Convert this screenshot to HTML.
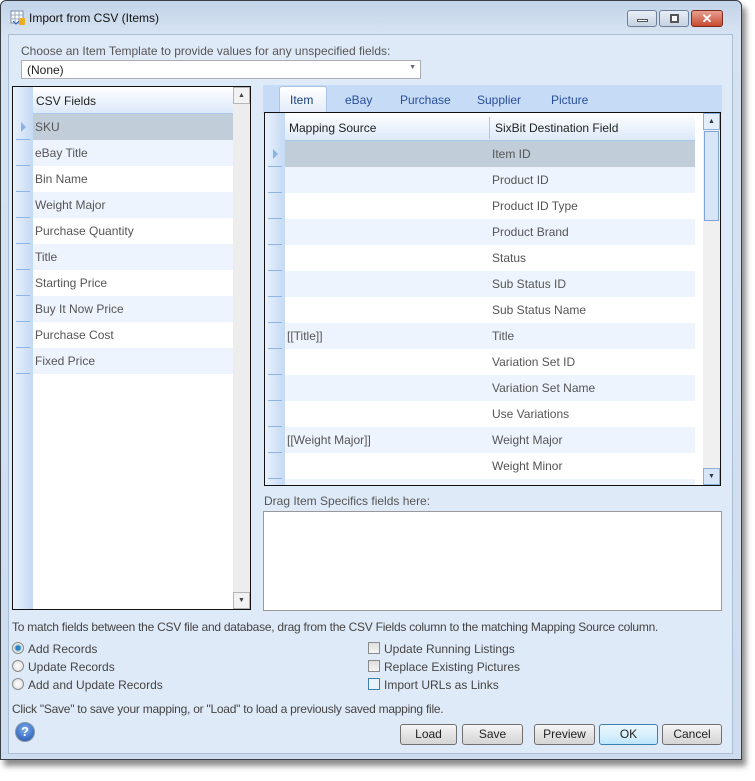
<!DOCTYPE html>
<html><head><meta charset="utf-8"><style>
*{box-sizing:border-box;margin:0;padding:0}
body{width:755px;height:781px;background:#fff;position:relative;overflow:hidden;font-family:"Liberation Sans",sans-serif;font-size:12px;color:#333}
.a{position:absolute}
.win{left:0;top:0;width:742px;height:760px;border:1px solid #3a3f46;border-radius:6px 6px 0 0;background:linear-gradient(#c3d4e8,#d6e3f2 34px,#cddcee);box-shadow:4px 6px 6px rgba(0,0,0,.45)}
.client{left:8px;top:34px;width:725px;height:720px;background:#dfeaf8;border:1px solid #a9bfd6}
.t{white-space:nowrap}
.grid{background:#fff;border:1px solid #111}
.rh{background:linear-gradient(90deg,#eaf2fd,#c4d9f3);}
.row{position:absolute;height:26px;line-height:26px;color:#555;font-size:12px}
.sel{background:#c1cdd9}
.alt{background:#edf4fd}
.hl{position:absolute;height:1px;background:#8db6e6}
.btn{position:absolute;top:724px;height:21px;border:1px solid #707070;border-radius:3px;background:linear-gradient(#f6f6f6,#e3e3e3 50%,#d5d5d5);text-align:center;line-height:19px;color:#222}
.rad{position:absolute;width:12px;height:12px;border-radius:50%;border:1px solid #8a8a8a;background:radial-gradient(#fff,#dcdcdc)}
.chk{position:absolute;width:12px;height:12px;border:1px solid #8a8a8a;background:linear-gradient(#dedede,#f4f4f4)}
</style></head><body>
<div class="a win"></div>
<!-- title -->
<svg class="a" style="left:10px;top:10px" width="16" height="16"><rect x="1" y="1" width="12" height="12" fill="#fff" stroke="#7a8ca8"/><path d="M1 5h12M1 9h12M5 1v12M9 1v12" stroke="#9ab" /><rect x="9" y="8" width="6" height="7" rx="1" fill="#e8b020"/><path d="M3 11l3 3 3-3" stroke="#3060c0" fill="none"/></svg>
<div class="a t" style="left:29px;top:11px;font-size:12px;color:#111">Import from CSV (Items)</div>
<div class="a" style="left:627px;top:10px;width:30px;height:17px;border:1px solid #6d7f99;border-radius:3px;background:linear-gradient(#e8eef6,#c5d2e2)"><div class="a" style="left:9px;top:8px;width:11px;height:3px;background:#fff;border:1px solid #555"></div></div>
<div class="a" style="left:659px;top:10px;width:30px;height:17px;border:1px solid #6d7f99;border-radius:3px;background:linear-gradient(#e8eef6,#c5d2e2)"><div class="a" style="left:10px;top:3px;width:9px;height:9px;background:#fff;border:2px solid #555"></div></div>
<div class="a" style="left:691px;top:10px;width:32px;height:17px;border:1px solid #7a2a20;border-radius:3px;background:linear-gradient(#e8a090,#c94a30);color:#fff;font-weight:bold;text-align:center;line-height:15px;font-size:13px">✕</div>
<div class="a client"></div>
<div class="a t" style="left:21px;top:44px;color:#555">Choose an Item Template to provide values for any unspecified fields:</div>
<div class="a" style="left:21px;top:60px;width:400px;height:19px;background:#fff;border:1px solid #abadb3"><span class="a" style="left:5px;top:2px;color:#222">(None)</span><span class="a" style="right:4px;top:3px;font-size:7px;color:#667">▼</span></div>

<!-- left grid -->
<div class="a grid" style="left:12px;top:86px;width:239px;height:524px"></div>
<div class="a rh" style="left:13px;top:87px;width:20px;height:522px"></div>
<div class="a" style="left:33px;top:87px;width:200px;height:27px;background:linear-gradient(#fff,#dce9f9);border-bottom:1px solid #aac8ec"><span class="a" style="left:3px;top:7px;color:#222">CSV Fields</span></div>
<div class="a" style="left:233px;top:87px;width:17px;height:522px;background:#ededed"></div>
<div class="a" style="left:233px;top:87px;width:17px;height:17px;border:1px solid #b5b5b5;background:#f2f2f2;font-size:7px;text-align:center;line-height:15px;color:#444">▲</div>
<div class="a" style="left:233px;top:592px;width:17px;height:17px;border:1px solid #b5b5b5;background:#f2f2f2;font-size:7px;text-align:center;line-height:15px;color:#444">▼</div>
<div class="row sel" style="left:33px;top:114px;width:200px;padding-left:2px">SKU</div>
<div class="row alt" style="left:33px;top:140px;width:200px;padding-left:2px">eBay Title</div>
<div class="row" style="left:33px;top:166px;width:200px;padding-left:2px">Bin Name</div>
<div class="row alt" style="left:33px;top:192px;width:200px;padding-left:2px">Weight Major</div>
<div class="row" style="left:33px;top:218px;width:200px;padding-left:2px">Purchase Quantity</div>
<div class="row alt" style="left:33px;top:244px;width:200px;padding-left:2px">Title</div>
<div class="row" style="left:33px;top:270px;width:200px;padding-left:2px">Starting Price</div>
<div class="row alt" style="left:33px;top:296px;width:200px;padding-left:2px">Buy It Now Price</div>
<div class="row" style="left:33px;top:322px;width:200px;padding-left:2px">Purchase Cost</div>
<div class="row alt" style="left:33px;top:348px;width:200px;padding-left:2px">Fixed Price</div>
<div class="a" style="left:21px;top:122px;width:0;height:0;border-left:5px solid #8ab4e6;border-top:5px solid transparent;border-bottom:5px solid transparent"></div>
<div class="hl" style="left:16px;top:139px;width:14px"></div><div class="hl" style="left:16px;top:165px;width:14px"></div><div class="hl" style="left:16px;top:191px;width:14px"></div><div class="hl" style="left:16px;top:217px;width:14px"></div><div class="hl" style="left:16px;top:243px;width:14px"></div><div class="hl" style="left:16px;top:269px;width:14px"></div><div class="hl" style="left:16px;top:295px;width:14px"></div><div class="hl" style="left:16px;top:321px;width:14px"></div><div class="hl" style="left:16px;top:347px;width:14px"></div><div class="hl" style="left:16px;top:373px;width:14px"></div>

<!-- tabs -->
<div class="a" style="left:263px;top:85px;width:459px;height:28px;background:#c6dcf6"></div>
<div class="a" style="left:279px;top:86px;width:48px;height:27px;background:linear-gradient(#fff,#e2ecf9);border:1px solid #a8c4e6;border-bottom:none;border-radius:3px 3px 0 0"></div>
<div class="a t" style="left:290px;top:93px;color:#1a3e7a">Item</div>
<div class="a t" style="left:345px;top:93px;color:#2a4e9a">eBay</div>
<div class="a t" style="left:400px;top:93px;color:#2a4e9a">Purchase</div>
<div class="a t" style="left:477px;top:93px;color:#2a4e9a">Supplier</div>
<div class="a t" style="left:551px;top:93px;color:#2a4e9a">Picture</div>

<!-- right grid -->
<div class="a grid" style="left:264px;top:112px;width:457px;height:374px;overflow:hidden">
<div class="a rh" style="left:0;top:0;width:20px;height:372px"></div>
<div class="a" style="left:20px;top:0;width:410px;height:28px;background:linear-gradient(#fff,#dce9f9);border-bottom:1px solid #aac8ec"><span class="a" style="left:4px;top:8px;color:#222">Mapping Source</span><div class="a" style="left:204px;top:4px;width:1px;height:22px;background:#aac8ec"></div><span class="a" style="left:210px;top:8px;color:#222">SixBit Destination Field</span></div>
<div class="a" style="left:438px;top:0;width:17px;height:372px;background:#f0f0f0"></div>
<div class="a" style="left:438px;top:0;width:17px;height:17px;border:1px solid #8fb0d8;background:#e4eefa;font-size:7px;text-align:center;line-height:15px;color:#334">▲</div>
<div class="a" style="left:439px;top:18px;width:15px;height:90px;border:1px solid #7fa4d6;background:#d6e6f8"></div>
<div class="a" style="left:438px;top:355px;width:17px;height:17px;border:1px solid #8fb0d8;background:#d6e6f8;font-size:7px;text-align:center;line-height:15px;color:#334">▼</div>
<div class="row sel" style="left:20px;top:28px;width:410px"><span class="a" style="left:207px">Item ID</span></div>
<div class="row alt" style="left:20px;top:54px;width:410px"><span class="a" style="left:207px">Product ID</span></div>
<div class="row" style="left:20px;top:80px;width:410px"><span class="a" style="left:207px">Product ID Type</span></div>
<div class="row alt" style="left:20px;top:106px;width:410px"><span class="a" style="left:207px">Product Brand</span></div>
<div class="row" style="left:20px;top:132px;width:410px"><span class="a" style="left:207px">Status</span></div>
<div class="row alt" style="left:20px;top:158px;width:410px"><span class="a" style="left:207px">Sub Status ID</span></div>
<div class="row" style="left:20px;top:184px;width:410px"><span class="a" style="left:207px">Sub Status Name</span></div>
<div class="row alt" style="left:20px;top:210px;width:410px"><span class="a" style="left:2px">[[Title]]</span><span class="a" style="left:207px">Title</span></div>
<div class="row" style="left:20px;top:236px;width:410px"><span class="a" style="left:207px">Variation Set ID</span></div>
<div class="row alt" style="left:20px;top:262px;width:410px"><span class="a" style="left:207px">Variation Set Name</span></div>
<div class="row" style="left:20px;top:288px;width:410px"><span class="a" style="left:207px">Use Variations</span></div>
<div class="row alt" style="left:20px;top:314px;width:410px"><span class="a" style="left:2px">[[Weight Major]]</span><span class="a" style="left:207px">Weight Major</span></div>
<div class="row" style="left:20px;top:340px;width:410px"><span class="a" style="left:207px">Weight Minor</span></div>
<div class="row alt" style="left:20px;top:366px;width:410px"></div>
<div class="a" style="left:8px;top:36px;width:0;height:0;border-left:5px solid #8ab4e6;border-top:5px solid transparent;border-bottom:5px solid transparent"></div>
<div class="hl" style="left:3px;top:53px;width:14px"></div><div class="hl" style="left:3px;top:79px;width:14px"></div><div class="hl" style="left:3px;top:105px;width:14px"></div><div class="hl" style="left:3px;top:131px;width:14px"></div><div class="hl" style="left:3px;top:157px;width:14px"></div><div class="hl" style="left:3px;top:183px;width:14px"></div><div class="hl" style="left:3px;top:209px;width:14px"></div><div class="hl" style="left:3px;top:235px;width:14px"></div><div class="hl" style="left:3px;top:261px;width:14px"></div><div class="hl" style="left:3px;top:287px;width:14px"></div><div class="hl" style="left:3px;top:313px;width:14px"></div><div class="hl" style="left:3px;top:339px;width:14px"></div><div class="hl" style="left:3px;top:365px;width:14px"></div>
</div>

<div class="a t" style="left:264px;top:494px;color:#555">Drag Item Specifics fields here:</div>
<div class="a" style="left:263px;top:511px;width:459px;height:100px;background:#fff;border:1px solid #999"></div>

<div class="a t" style="left:12px;top:620px;color:#444;font-size:12px;letter-spacing:-0.25px">To match fields between the CSV file and database, drag from the CSV Fields column to the matching Mapping Source column.</div>
<div class="rad" style="left:12px;top:642px;background:radial-gradient(#2a7fc8 30%,#9cc 45%,#eee 60%)"></div>
<div class="a t" style="left:28px;top:642px;color:#444">Add Records</div>
<div class="rad" style="left:12px;top:660px"></div>
<div class="a t" style="left:28px;top:660px;color:#444">Update Records</div>
<div class="rad" style="left:12px;top:678px"></div>
<div class="a t" style="left:28px;top:678px;color:#444">Add and Update Records</div>
<div class="chk" style="left:368px;top:642px"></div>
<div class="a t" style="left:384px;top:642px;color:#444">Update Running Listings</div>
<div class="chk" style="left:368px;top:660px"></div>
<div class="a t" style="left:384px;top:660px;color:#444">Replace Existing Pictures</div>
<div class="chk" style="left:368px;top:678px;border-color:#3c7fb1;background:#eaf3fb"></div>
<div class="a t" style="left:384px;top:678px;color:#444">Import URLs as Links</div>
<div class="a t" style="left:12px;top:702px;color:#444;letter-spacing:-0.25px">Click "Save" to save your mapping, or "Load" to load a previously saved mapping file.</div>
<div class="a" style="left:15px;top:722px;width:20px;height:20px;border-radius:50%;background:radial-gradient(circle at 50% 35%,#7ab0f0,#1f4fa8);border:1px solid #8899aa;color:#fff;font-weight:bold;text-align:center;line-height:18px;font-size:13px">?</div>
<div class="btn" style="left:400px;width:57px">Load</div>
<div class="btn" style="left:462px;width:61px">Save</div>
<div class="btn" style="left:534px;width:61px">Preview</div>
<div class="btn" style="left:599px;width:59px;border-color:#3c7fb1;background:linear-gradient(#eaf6fd,#d9f0fc 50%,#bee6fd)">OK</div>
<div class="btn" style="left:662px;width:60px">Cancel</div>
</body></html>
